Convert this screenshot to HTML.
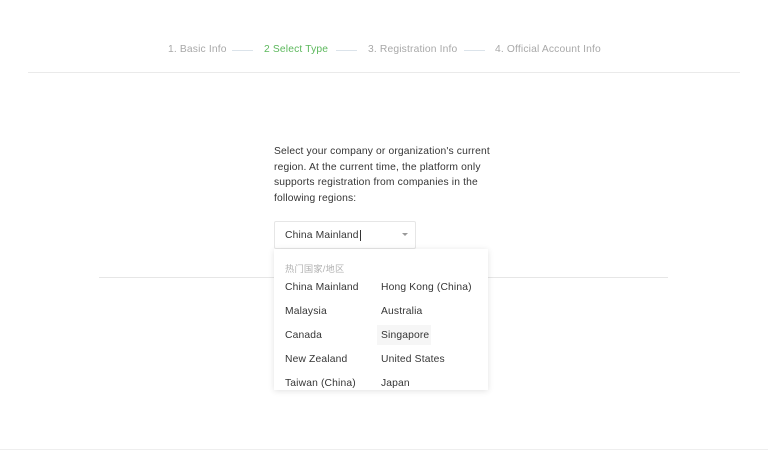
<!DOCTYPE html>
<html><head><style>
body{margin:0;width:768px;height:451px;background:#fff;font-family:"Liberation Sans","Noto Sans CJK SC",sans-serif;position:relative;overflow:hidden;color:#353535}
.a{position:absolute;white-space:nowrap;letter-spacing:0.15px}
.steps{top:44px;font-size:10.3px;color:#a8a8a8}
.dash{position:absolute;top:50px;height:1px;background:#dbe3ea;width:21px}
.t{font-size:10.3px;line-height:15.7px}
.opt{font-size:10.3px;color:#353535}
</style></head><body>
<div class="a steps" style="left:168px">1. Basic Info</div>
<div class="dash" style="left:232px"></div>
<div class="a steps" style="left:264px;color:#5cb85c">2 Select Type</div>
<div class="dash" style="left:336px"></div>
<div class="a steps" style="left:368px">3. Registration Info</div>
<div class="dash" style="left:464px"></div>
<div class="a steps" style="left:495px">4. Official Account Info</div>
<div class="a" style="left:28px;top:72px;width:712px;height:1px;background:#eaeaea"></div>
<div class="a t" style="left:274px;top:144px;white-space:normal;width:230px">Select your company or organization's current<br>region. At the current time, the platform only<br>supports registration from companies in the<br>following regions:</div>
<div class="a" style="left:99px;top:277px;width:569px;height:1px;background:#e6e6e6"></div>
<div class="a" style="left:0;top:449px;width:768px;height:1px;background:#eee"></div>
<div class="a" style="left:274px;top:221px;width:140px;height:26px;border:1px solid #e6e6e6;border-radius:2px;background:#fff"></div>
<div class="a" style="left:285px;top:230px;font-size:10.3px">China Mainland<span style="border-left:1px solid #333;margin-left:1px"></span></div>
<div class="a" style="left:402px;top:233px;width:0;height:0;border-left:3px solid transparent;border-right:3px solid transparent;border-top:3px solid #999"></div>
<div class="a" style="left:274px;top:249px;width:214px;height:141px;background:#fff;box-shadow:0 1px 6px rgba(0,0,0,.12)"></div>
<div class="a" style="left:285px;top:261px;font-size:9.3px;color:#b2b2b2">热门国家/地区</div>
<div class="a" style="left:377px;top:325px;width:54px;height:20px;background:#f6f6f6"></div>
<div class="a opt" style="left:285px;top:282px">China Mainland</div>
<div class="a opt" style="left:381px;top:282px">Hong Kong (China)</div>
<div class="a opt" style="left:285px;top:306px">Malaysia</div>
<div class="a opt" style="left:381px;top:306px">Australia</div>
<div class="a opt" style="left:285px;top:330px">Canada</div>
<div class="a opt" style="left:381px;top:330px">Singapore</div>
<div class="a opt" style="left:285px;top:354px">New Zealand</div>
<div class="a opt" style="left:381px;top:354px">United States</div>
<div class="a opt" style="left:285px;top:378px">Taiwan (China)</div>
<div class="a opt" style="left:381px;top:378px">Japan</div>
</body></html>
